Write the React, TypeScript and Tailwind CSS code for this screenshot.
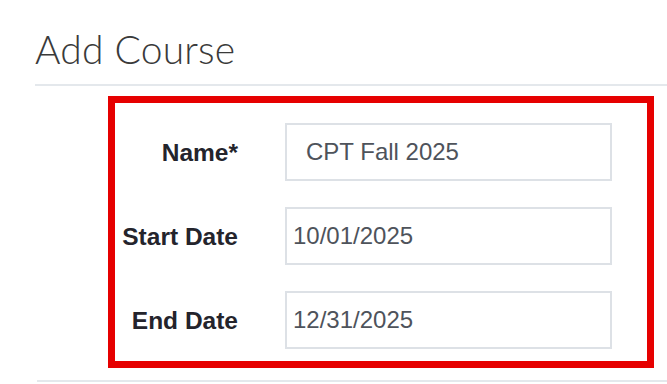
import React from 'react';

const fields = [
  { label: 'Name*', value: 'CPT Fall 2025', pad: 'pl-[19px]' },
  { label: 'Start Date', value: '10/01/2025', pad: 'pl-[6px]' },
  { label: 'End Date', value: '12/31/2025', pad: 'pl-[6px]' },
];

const App: React.FC = () => {
  return (
    <div className="w-[667px] h-[384px] overflow-hidden bg-white font-['Liberation_Sans',Arial,sans-serif]">
      <div className="pl-[35px] pt-[26px]">
        <h1 className="font-['Lato','Liberation_Sans',sans-serif] text-[39px] leading-[46px] font-light text-[#3a3a3a] tracking-[0.2px]">
          Add Course
        </h1>
        <div className="mt-[12px] h-[2px] bg-[#e4e8ec]" />
      </div>

      <div className="ml-[108px] mt-[10px] w-[546px] h-[272px] border-[7px] border-[#e60000] pt-[20px]">
        <div className="flex flex-col gap-[26px]">
          {fields.map((f) => (
            <div key={f.label} className="flex items-center">
              <label className="w-[123px] pt-[2px] text-right text-[24.5px] leading-none font-bold text-[#24242c]">
                {f.label}
              </label>
              <div
                className={`ml-[47px] w-[327px] h-[58px] border-2 border-[#dde1e6] flex items-center ${f.pad} text-[24px] text-[#4e535b]`}
              >
                {f.value}
              </div>
            </div>
          ))}
        </div>
      </div>

      <div className="ml-[37px] mt-[12px] h-[2px] bg-[#e4e8ec]" />
    </div>
  );
};

export default App;
